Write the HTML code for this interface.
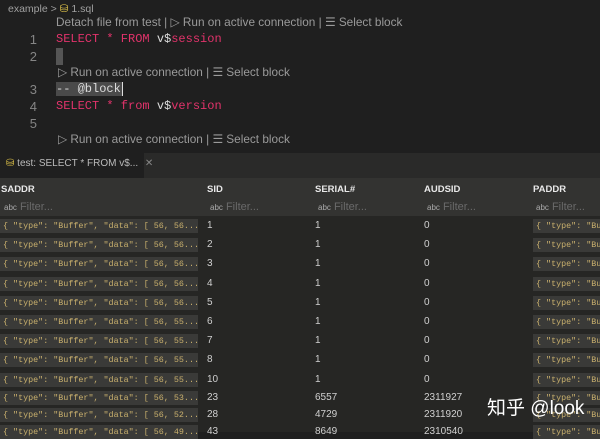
<!DOCTYPE html>
<html><head><style>
body{margin:0;width:600px;height:432px;overflow:hidden;background:#1f1f1f;font-family:"Liberation Sans",sans-serif;position:relative}
.a{position:absolute;white-space:nowrap}
.m{font-family:"Liberation Mono",monospace;font-size:12px}
.lens{color:#9a9a9a;font-size:11.8px}
.ln{color:#858585;font-size:13px;width:22px;text-align:right}
.k{color:#e2336b}
.h{color:#e8e8e8;font-weight:bold;font-size:9.5px}
.f{color:#6a6a6a;font-size:11px}
.cell{color:#d0d0d0;font-size:10px}
.buf{background:#3a3a38;color:#c9b06d;font-family:"Liberation Mono",monospace;font-size:8.4px;padding:2px 3px;left:0;width:198px;overflow:hidden;box-sizing:border-box;height:14px;line-height:10px}
</style></head><body>
<div class="a" style="left:8px;top:3px;font-size:10.5px;color:#a0a0a0">example &gt; <span style="color:#e5c84a">&#9921;</span> 1.sql</div>
<div class="a lens" style="left:56px;top:15px">Detach file from test | ▷ Run on active connection | ☰ Select block</div>
<div class="a ln" style="left:15px;top:32px">1</div>
<div class="a m" style="left:56px;top:32px"><span class="k">SELECT * FROM </span><span style="color:#ddd">v$</span><span class="k">session</span></div>
<div class="a ln" style="left:15px;top:49px">2</div>
<div class="a" style="left:56px;top:48px;width:7px;height:17px;background:#555"></div>
<div class="a lens" style="left:58px;top:65px">▷ Run on active connection | ☰ Select block</div>
<div class="a ln" style="left:15px;top:82px">3</div>
<div class="a m" style="left:56px;top:82px;background:#4a4a4a;color:#ddd;padding-right:1px;border-right:1px solid #ddd">-- @block</div>
<div class="a ln" style="left:15px;top:99px">4</div>
<div class="a m" style="left:56px;top:99px"><span class="k">SELECT * from </span><span style="color:#ddd">v$</span><span class="k">version</span></div>
<div class="a ln" style="left:15px;top:116px">5</div>
<div class="a lens" style="left:58px;top:132px">▷ Run on active connection | ☰ Select block</div>
<div class="a" style="left:0;top:153px;width:600px;height:25px;background:#2a2a29"></div>
<div class="a" style="left:0;top:153px;width:144px;height:25px;background:#1f1f1f"></div>
<div class="a" style="left:6px;top:158px;font-size:10px;color:#bbb"><span style="color:#e5c84a">&#9921;</span> test: SELECT * FROM v$... <span style="color:#888;margin-left:4px">✕</span></div>
<div class="a" style="left:0;top:178px;width:600px;height:38px;background:#333331"></div>
<div class="a h" style="left:1px;top:184px">SADDR</div>
<div class="a h" style="left:207px;top:184px">SID</div>
<div class="a h" style="left:315px;top:184px">SERIAL#</div>
<div class="a h" style="left:424px;top:184px">AUDSID</div>
<div class="a h" style="left:533px;top:184px">PADDR</div>
<div class="a f" style="left:4px;top:201px"><span style="font-size:8px;color:#aaa">abc</span> Filter...</div>
<div class="a f" style="left:210px;top:201px"><span style="font-size:8px;color:#aaa">abc</span> Filter...</div>
<div class="a f" style="left:318px;top:201px"><span style="font-size:8px;color:#aaa">abc</span> Filter...</div>
<div class="a f" style="left:427px;top:201px"><span style="font-size:8px;color:#aaa">abc</span> Filter...</div>
<div class="a f" style="left:536px;top:201px"><span style="font-size:8px;color:#aaa">abc</span> Filter...</div>
<div class="a" style="left:0;top:216px;width:600px;height:216px;background:#262624"></div>
<div id="rows"></div>
<script>
var sid=[1,2,3,4,5,6,7,8,10,23,28,43],ser=[1,1,1,1,1,1,1,1,1,6557,4729,8649],aud=[0,0,0,0,0,0,0,0,0,2311927,2311920,2310540];
var d=['56, 56...','56, 56...','56, 56...','56, 56...','56, 56...','56, 55...','56, 55...','56, 55...','56, 55...','56, 53...','56, 52...','56, 49...'];
var ys=[219,238,257,277,296,315,334,353,373,391,408,425],h='';
for(var i=0;i<12;i++){var y=ys[i];
h+='<div class="a buf" style="top:'+y+'px">{ "type": "Buffer", "data": [ '+d[i]+'</div>';
h+='<div class="a cell" style="left:207px;top:'+(y+1)+'px">'+sid[i]+'</div>';
h+='<div class="a cell" style="left:315px;top:'+(y+1)+'px">'+ser[i]+'</div>';
h+='<div class="a cell" style="left:424px;top:'+(y+1)+'px">'+aud[i]+'</div>';
h+='<div class="a buf" style="left:533px;top:'+y+'px;width:67px">{ "type": "Bu</div>';}
document.getElementById('rows').innerHTML=h;
</script>
<div class="a" style="left:487px;top:393px;font-size:19px;color:#fff;font-family:'Liberation Sans','Noto Sans CJK SC',sans-serif">知乎 @look</div>
</body></html>
